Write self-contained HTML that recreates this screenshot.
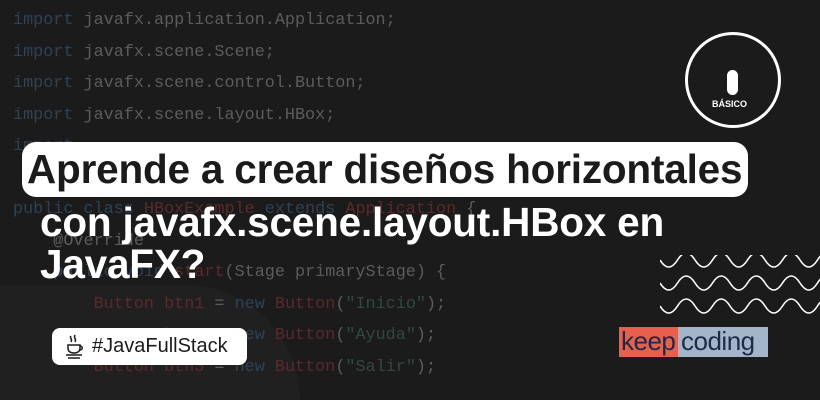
<!DOCTYPE html>
<html><head><meta charset="utf-8"><style>
html,body{margin:0;width:820px;height:400px;overflow:hidden}
body{background:#1b1b1b;position:relative;font-family:"Liberation Sans",sans-serif}
.code{position:absolute;left:13px;top:5px;font-family:"Liberation Mono",monospace;font-size:16.8px;line-height:31.5px;color:#5c5c5c;white-space:pre}
.k{color:#2f4254}.r{color:#5a2a2a}.g{color:#2f4a3c}
.blob{position:absolute;left:-120px;top:285px;width:420px;height:115px;border-radius:210px 210px 0 0;background:#202020}
.t1{position:absolute;left:22px;top:142px;width:726px;height:55px;background:#fff;border-radius:14px}
.t1 span{position:absolute;left:5px;top:4px;font-size:40.5px;font-weight:bold;color:#1b1b1b;letter-spacing:-0.2px;white-space:nowrap}
.t2{position:absolute;left:40px;top:201px;font-size:40.5px;font-weight:bold;color:#fff;line-height:42px;letter-spacing:-0.2px;white-space:nowrap}
.tag{position:absolute;left:52px;top:328px;width:195px;height:37px;background:#fff;border-radius:8px}
.tag span{position:absolute;left:40px;top:7px;font-size:20px;color:#1b1b1b}
.circ{position:absolute;left:685px;top:32px;width:90px;height:90px;border:3px solid #fff;border-radius:50%}
.pill{position:absolute;left:727px;top:70px;width:11px;height:25px;background:#fff;border-radius:6px}
.bas{position:absolute;left:712px;top:99px;font-size:9px;font-weight:bold;color:#fff}
.kc{position:absolute;left:619px;top:327px;height:30px;width:149px;display:flex;font-size:26px;color:#1d2a4a;letter-spacing:-0.5px}
.kc div{height:30px;line-height:28px}
</style></head><body>
<div class="blob"></div>
<div class="code"><span class="k">import</span> javafx.application.Application;
<span class="k">import</span> javafx.scene.Scene;
<span class="k">import</span> javafx.scene.control.Button;
<span class="k">import</span> javafx.scene.layout.HBox;
<span class="k">import</span>

<span class="k">public class</span> <span class="r">HBoxExample</span> <span class="k">extends</span> <span class="r">Application</span> {
    @Override
    <span class="k">public void</span> <span class="r">start</span>(Stage primaryStage) {
        <span class="r">Button btn1</span> = <span class="k">new</span> <span class="r">Button</span>(<span class="g">"Inicio"</span>);
        <span class="r">Button btn2</span> = <span class="k">new</span> <span class="r">Button</span>(<span class="g">"Ayuda"</span>);
        <span class="r">Button btn3</span> = <span class="k">new</span> <span class="r">Button</span>(<span class="g">"Salir"</span>);</div>
<div class="t1"><span>Aprende a crear diseños horizontales</span></div>
<div class="t2">con javafx.scene.layout.HBox en<br>JavaFX?</div>
<div class="tag"><svg style="position:absolute;left:10px;top:6px" width="24" height="26" viewBox="0 0 24 26" fill="none" stroke="#1b1b1b" stroke-width="1.5"><path d="M9 2c-2 2 2 3 0 6M13 1c-2 3 2 4 0 7M6 11h12v3c0 3-2 5-6 5s-6-2-6-5zM18 12c3 0 3 4 0 4M4 21h16M6 24h12"/></svg><span>#JavaFullStack</span></div>
<div class="circ"></div><div class="pill"></div><div class="bas">BÁSICO</div>
<svg style="position:absolute;left:660px;top:255px" width="160" height="70" fill="none" stroke="#fff" stroke-width="1.6">
<path id="w" d="M0 5 q8.75 14 17.5 0 t17.5 0 t17.5 0 t17.5 0 t17.5 0 t17.5 0 t17.5 0 t17.5 0 t17.5 0 t17.5 0"/>
<use href="#w" y="23"/><use href="#w" y="46"/></svg>
<div class="kc"><div style="background:#e8604c;width:59px;padding-left:2px;box-sizing:border-box">keep</div><div style="background:#a3b6c9;width:90px;padding-left:3px;box-sizing:border-box">coding</div></div>
</body></html>
